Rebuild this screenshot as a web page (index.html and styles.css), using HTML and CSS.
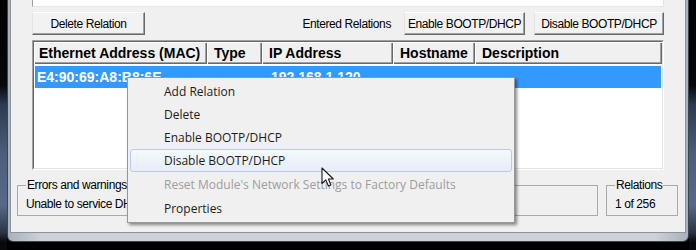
FILE: index.html
```html
<!DOCTYPE html>
<html>
<head>
<meta charset="utf-8">
<link rel="stylesheet" href="styles.css">
</head>
<body>
<div class="desk">
  <div class="edge"></div>
  <div class="center">
    <div class="window">
      <div class="client">
        <div class="main">
          <div class="topbox"></div>
          <div class="toolbar">
            <button class="btn btn-delete">Delete Relation</button>
            <span class="spacer"></span>
            <span class="label">Entered Relations</span>
            <button class="btn btn-enable">Enable BOOTP/DHCP</button>
            <button class="btn btn-disable">Disable BOOTP/DHCP</button>
          </div>
          <div class="listview">
            <div class="lv-inner">
              <div class="lv-header">
                <div class="hcell first">Ethernet Address (MAC)</div>
                <div class="hcell">Type</div>
                <div class="hcell">IP Address</div>
                <div class="hcell">Hostname</div>
                <div class="hcell">Description</div>
              </div>
              <div class="lv-row selected">
                <div class="cell first">E4:90:69:A8:B8:6E</div>
                <div class="cell"></div>
                <div class="cell">192.168.1.120</div>
                <div class="cell"></div>
                <div class="cell"></div>
              </div>
            </div>
          </div>
        </div>
        <div class="groups">
          <fieldset class="group errors">
            <legend>Errors and warnings</legend>
            <div class="gtext">Unable to service DHCP request</div>
          </fieldset>
          <fieldset class="group relations">
            <legend>Relations</legend>
            <div class="gtext">1 of 256</div>
          </fieldset>
        </div>
      </div>
    </div>
  </div>
  <div class="edge"></div>

  <div class="menu">
    <div class="mitem">Add Relation</div>
    <div class="mitem">Delete</div>
    <div class="mitem">Enable BOOTP/DHCP</div>
    <div class="mitem hover">Disable BOOTP/DHCP</div>
    <div class="mitem disabled">Reset Module's Network Settings to Factory Defaults</div>
    <div class="mitem">Properties</div>
  </div>

  <svg class="cursor" width="14" height="21" viewBox="0 0 14 21">
    <path d="M1 1 L1 16.5 L4.8 12.9 L7.4 19 L9.9 18 L7.4 12 L12.3 12 Z" fill="#fbfbfb" stroke="#1a1a1a" stroke-width="1.1" stroke-linejoin="round"/>
  </svg>
</div>
</body>
</html>
```

FILE: styles.css
```css
html, body {
  margin: 0;
  padding: 0;
  background: #000;
}

.desk {
  position: relative;
  width: 696px;
  height: 250px;
  display: flex;
  background: #000;
  overflow: hidden;
  font-family: "Liberation Sans", Arial, sans-serif;
  font-size: 12px;
  color: #000;
}

.edge {
  width: 7px;
  flex: none;
  background: linear-gradient(to bottom, #000 0, #05070a 34%, #2c3b52 42%, #4b5f7c 62%, #56698a 82%, #2a3546 93%, #07090c 97%);
}

.center {
  width: 682px;
  flex: none;
  display: flex;
  flex-direction: column;
}

.window {
  height: 242px;
  box-sizing: border-box;
  border: 1px solid #3e444c;
  border-top: 0;
  border-radius: 0 0 6px 6px;
  background: linear-gradient(to right, #a9b1bb, #cdd2d8 5%, #cdd2d8 95%, #a9b1bb);
  padding: 0 2px 8px 2px;
}

.client {
  height: 100%;
  box-sizing: border-box;
  background: #f0f0f0;
  border: 1px solid #8d939a;
  border-top: 0;
}

.main {
  margin-left: 21px;
  width: 632px;
}

.topbox {
  height: 6px;
  background: #fff;
  border-left: 1px solid #a0a0a0;
  border-right: 1px solid #e3e3e3;
  border-bottom: 1px solid #e3e3e3;
}

.toolbar {
  display: flex;
  align-items: center;
  margin-top: 5px;
  height: 23px;
}

.btn {
  height: 23px;
  box-sizing: border-box;
  padding: 0;
  margin: 0;
  font-family: "Liberation Sans", Arial, sans-serif;
  font-size: 12px;
  letter-spacing: -0.4px;
  color: #000;
  background: #f2f2f2;
  border: 1px solid;
  border-color: #fff #696969 #696969 #e4e4e4;
  box-shadow: inset -1px -1px 0 #a0a0a0;
}

.btn-delete { width: 113px; }
.btn-enable { width: 121px; }
.btn-disable { width: 130px; margin-left: 9px; }

.spacer { flex: 1; }

.label {
  letter-spacing: -0.4px;
  margin-right: 13px;
}

.listview {
  margin-top: 5px;
  height: 130px;
  box-sizing: border-box;
  border: 1px solid;
  border-color: #a0a0a0 #fff #fff #a0a0a0;
}

.lv-inner {
  height: 100%;
  box-sizing: border-box;
  background: #fff;
  border: 1px solid;
  border-color: #696969 #e3e3e3 #e3e3e3 #696969;
}

.lv-header,
.lv-row {
  display: grid;
  grid-template-columns: 173px 55px 131px 82px 1fr;
}

.lv-header {
  height: 22px;
}

.hcell {
  background: #f0f0f0;
  font-weight: bold;
  font-size: 14px;
  line-height: 22px;
  padding-left: 7px;
  white-space: nowrap;
  overflow: hidden;
  box-shadow: inset 1px 1px 0 #fff, inset -1px -1px 0 #696969, inset -2px -2px 0 #a0a0a0;
}

.hcell.first { padding-left: 5px; }

.lv-row {
  margin-top: 2px;
  height: 22px;
}

.lv-row.selected {
  background: #3399ff;
  color: #fff;
  margin-left: 1px;
  margin-right: 1px;
}

.cell {
  font-weight: bold;
  font-size: 14px;
  line-height: 22px;
  padding-left: 8px;
  white-space: nowrap;
}

.cell.first { padding-left: 2px; }

.groups {
  display: flex;
  gap: 8px;
  margin-top: 9px;
  margin-left: 6px;
}

.group {
  margin: 0;
  padding: 6px 0 4px 8px;
  border: 1px solid #a9a9a9;
  box-sizing: border-box;
  min-width: 0;
}

.group legend {
  padding: 0 1px;
  line-height: 12px;
  letter-spacing: -0.4px;
}

.gtext {
  line-height: 14px;
  letter-spacing: -0.4px;
  white-space: nowrap;
  overflow: hidden;
}

.errors { width: 581px; }
.relations { width: 72px; }

.menu {
  position: absolute;
  left: 127px;
  top: 77px;
  width: 388px;
  box-sizing: border-box;
  padding: 2px;
  background: #f0f0f0;
  border: 1px solid #979797;
  box-shadow: 2px 2px 3px rgba(0, 0, 0, 0.45);
  font-family: "Open Sans", "Noto Sans", sans-serif;
  font-size: 12px;
  color: #1c1c1c;
}

.mitem {
  height: 23px;
  line-height: 23px;
  padding-left: 34px;
  box-sizing: border-box;
  white-space: nowrap;
}

.mitem.hover {
  border: 1px solid #b2cdee;
  border-radius: 3px;
  background: linear-gradient(to bottom, #f6f9fd, #e6edf8);
  line-height: 21px;
  padding-left: 33px;
}

.mitem.disabled {
  color: #9d9d9d;
  height: 25px;
  line-height: 25px;
}

.cursor {
  position: absolute;
  left: 321px;
  top: 167px;
}
```
